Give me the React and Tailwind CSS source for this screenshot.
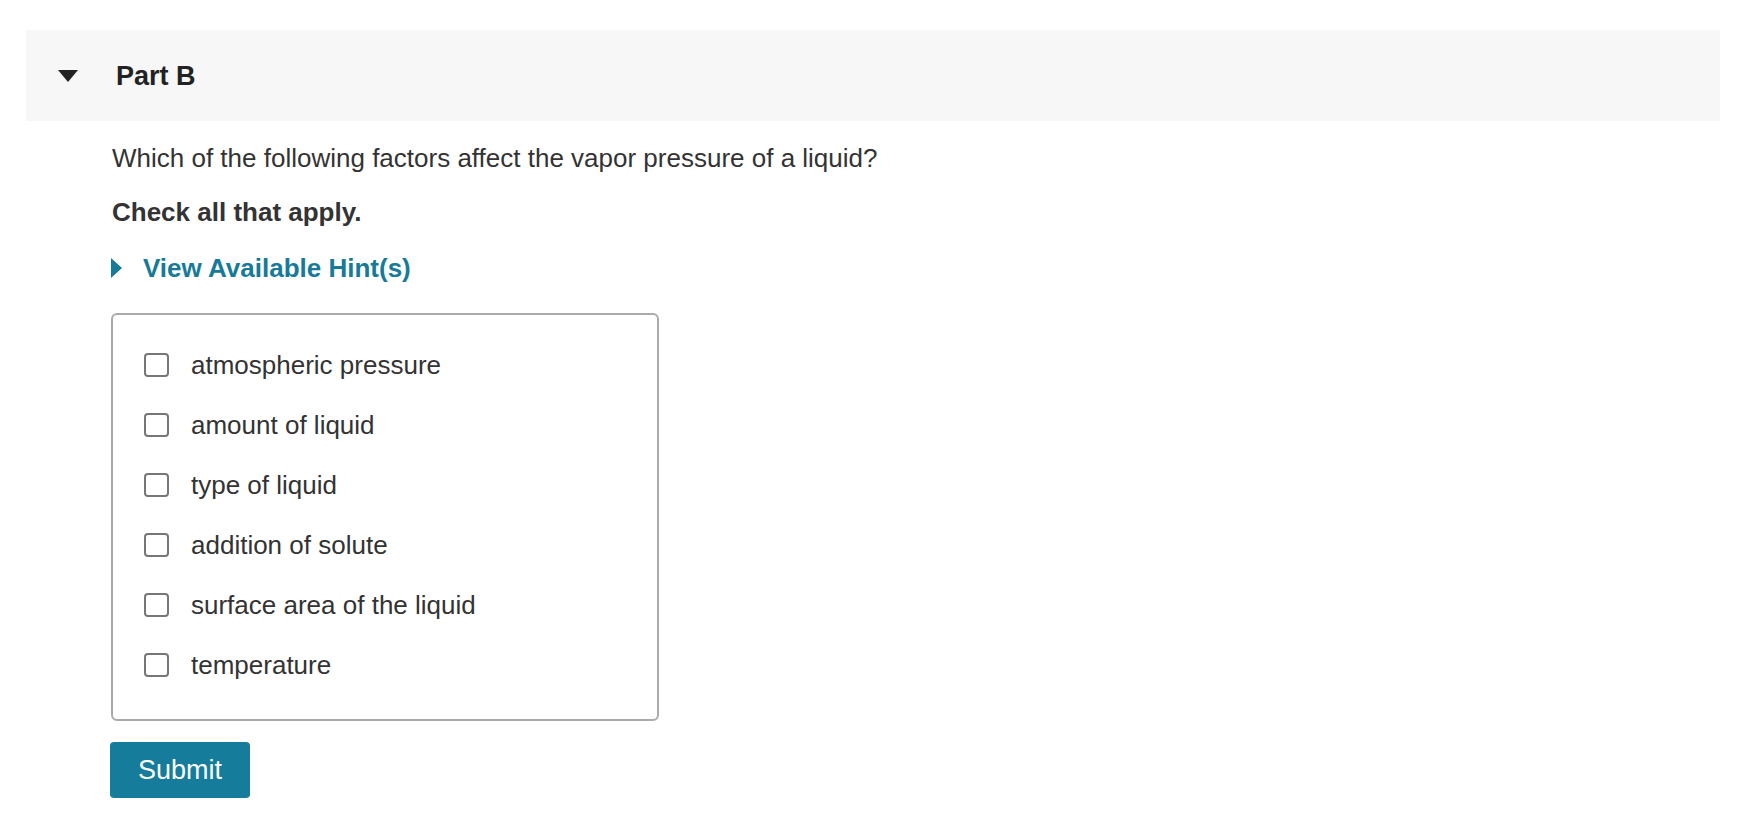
import { useState } from "react";

const options = [
  "atmospheric pressure",
  "amount of liquid",
  "type of liquid",
  "addition of solute",
  "surface area of the liquid",
  "temperature",
];

function App() {
  const [checked, setChecked] = useState({});

  const toggle = (i) => setChecked((c) => ({ ...c, [i]: !c[i] }));

  return (
    <div
      className="min-h-screen bg-white pt-[30px] pl-[26px] pr-[24px] text-[#333]"
      style={{ fontFamily: '"Liberation Sans", Arial, Helvetica, sans-serif' }}
    >
      <div className="flex h-[91px] items-center bg-[#f7f7f7]">
        <span className="ml-[32px] h-0 w-0 border-x-[10px] border-t-[12px] border-x-transparent border-t-[#222]" />
        <h2 className="ml-[38px] text-[27px] font-bold leading-[30px] text-[#222]">
          Part B
        </h2>
      </div>

      <div className="pl-[86px]">
        <p className="mt-[22px] text-[26px] leading-[30px]">
          Which of the following factors affect the vapor pressure of a liquid?
        </p>
        <p className="mt-[24px] text-[26px] font-bold leading-[30px]">
          Check all that apply.
        </p>

        <button className="mt-[26px] flex items-center text-[#177a98]">
          <span className="-ml-px h-0 w-0 border-y-[10px] border-l-[11px] border-y-transparent border-l-[#177a98]" />
          <span className="ml-[21px] text-[26px] font-bold leading-[30px]">
            View Available Hint(s)
          </span>
        </button>

        <div className="mt-[30px] w-[548px] -ml-px rounded-[6px] border-2 border-[#aaa] pt-[20px] pb-[24px] pl-[31px]">
          {options.map((o, i) => (
            <label key={o} className="flex h-[60px] cursor-pointer items-center">
              <span
                onClick={() => toggle(i)}
                className={
                  "h-[24px] w-[25px] rounded-[4px] border-2 border-[#777] " +
                  (checked[i] ? "bg-[#177a98]" : "bg-white")
                }
              />
              <span className="ml-[22px] text-[26px] leading-[30px]">{o}</span>
            </label>
          ))}
        </div>

        <button className="mt-[21px] -ml-[2px] h-[56px] w-[140px] rounded-[4px] bg-[#157c9c] text-[27px] leading-[30px] text-white">
          Submit
        </button>
      </div>
    </div>
  );
}

export default App;
